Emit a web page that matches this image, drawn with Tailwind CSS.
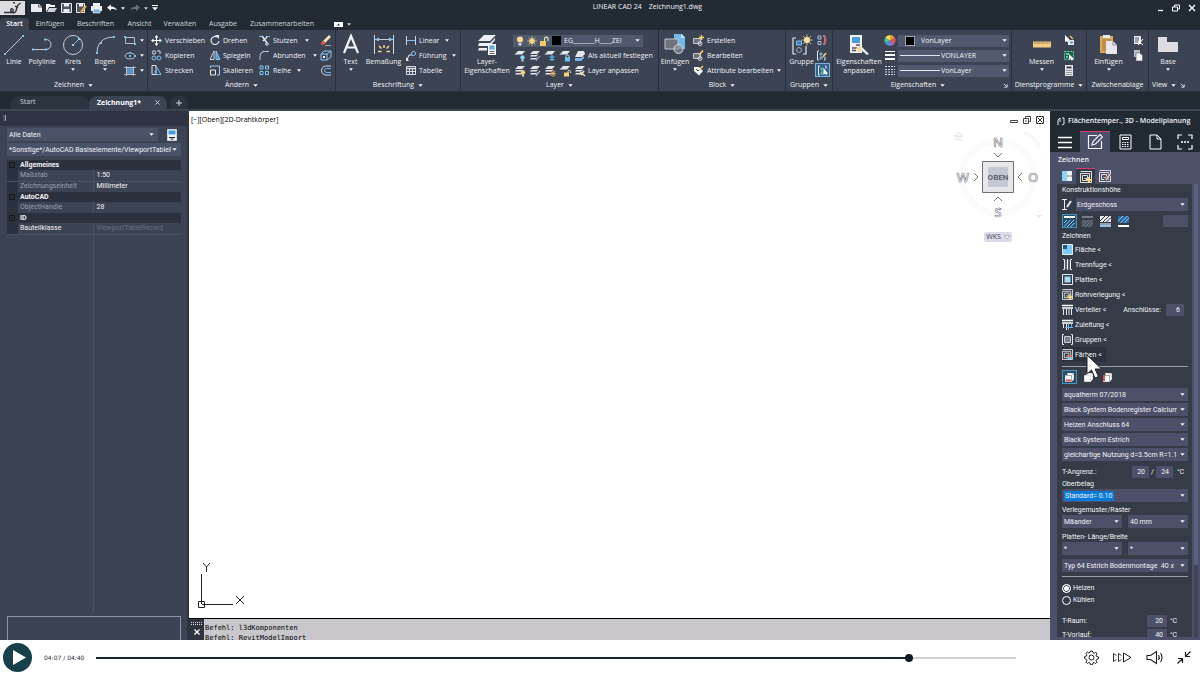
<!DOCTYPE html>
<html lang="de">
<head>
  <meta charset="UTF-8">
  <meta name="viewport" content="width=device-width, initial-scale=1.0">
  <title>LINEAR CAD 24 - Zeichnung1.dwg</title>
  <script src="https://cdn.jsdelivr.net/npm/@tailwindcss/browser@4"></script>
</head>
<body class="flex flex-col h-screen min-h-[600px] overflow-hidden bg-white font-['Open_Sans','Noto_Sans',sans-serif] text-[7px] leading-[10px] text-gray-100">

  <!-- Shared icons -->
  <svg class="hidden">
    <symbol id="dn" viewBox="0 0 6 4"><path d="M0 .3h6L3 3.7z" fill="currentColor"/></symbol>
    <symbol id="stack" viewBox="0 0 12 12"><g fill="#e4e6ea"><path d="M4 1h7L8 4H1z"/><path d="M2 5h6l2-1.500L7.500 6.500H1z"/><path d="M2 8h5.500l2-1.500L7 9.500H1z"/></g></symbol>
    <symbol id="layer1" viewBox="0 0 12 12"><path d="M4 1h7L8 4.500H1z" fill="#e4e6ea"/><path d="M4 1 1 4.500h2" fill="none" stroke="#9aa3b3"/></symbol>
    <symbol id="spiral" viewBox="0 0 12 12"><path d="M.5.5h11v11H.5V2.500h9v7h-7v-5h5v3h-3" fill="none" stroke="#f0f1f4" stroke-width=".9"/></symbol>
    <symbol id="launch" viewBox="0 0 6 6"><path d="M1 1l3.500 3.500M5 1.500V5H1.500" fill="none" stroke="currentColor"/></symbol>
  </svg>

  <!-- Title bar -->
  <header class="flex h-4 shrink-0 bg-[#222a33]">
    <div class="flex flex-[6] items-center gap-[4px]">
      <button aria-label="Menü" class="bg-[#dddde1] w-[25px] h-[14px] flex items-center justify-center mr-[2px]">
        <svg class="w-[20px] h-[13px]" viewBox="0 0 20 13" fill="none" stroke="#30343b" stroke-width="1.500"><path d="M1 10.500h6c3 0 4-2 2.500-3.500C8 6 7 8 8.500 10.500c3 1 5-1 5-3.500 0-2 1-4 4-6M12 4l3 2M10 0l2 1.500"/></svg>
      </button>
      <button aria-label="Neu"><svg class="w-[11px] h-[12px]" viewBox="0 0 11 12"><path d="M0 2h8l3 3v5H0z" fill="#e8eaed"/><path d="M7.500 2.500V5H11" fill="none" stroke="#555"/></svg></button>
      <button aria-label="Öffnen"><svg class="w-[11px] h-[12px]" viewBox="0 0 11 12"><path d="M0 10V2h4l1 1h4v2H3z" fill="#fff"/><path d="M3 6h8l-2.500 4H1z" fill="#cfd2d8"/></svg></button>
      <button aria-label="Speichern"><svg class="w-[11px] h-[12px]" viewBox="0 0 11 12"><path d="M.5 1.500h10v9h-10z" fill="#4d5561" stroke="#e8eaed"/><path d="M3 1.500h5v3H3zM2.500 7h6v3.500h-6z" fill="#e8eaed"/></svg></button>
      <button aria-label="Speichern unter"><svg class="w-[11px] h-[12px]" viewBox="0 0 11 12"><path d="M.5 1.500h8v9h-8z" fill="#4d5561" stroke="#e8eaed"/><path d="M3 1.500h4v3H3z" fill="#e8eaed"/><path d="M5 10l5-6" stroke="#f0b05a" stroke-width="2"/><path d="M4 11l1.500-1" stroke="#e0604a"/></svg></button>
      <button aria-label="Drucken"><svg class="w-[11px] h-[12px]" viewBox="0 0 11 12"><path d="M2 1h7v3H2zM0 4h11v5H0z" fill="#eceef1"/><path d="M2 7h7v4H2z" fill="#7fb7e6" stroke="#fff" stroke-width=".6"/></svg></button>
      <button aria-label="Zurück" class="flex items-center gap-[4px] ml-[1px]"><svg class="w-[10px] h-[8px]" viewBox="0 0 10 8"><path d="M0 3.500 4 .5v2c3 0 5 1.500 6 4-2-1.500-4-1.700-6-1.500v2z" fill="#f1f2f4"/></svg><svg class="w-[4px] h-[3px]"><use href="#dn"/></svg></button>
      <button aria-label="Wiederholen" class="flex items-center gap-[4px] ml-[1px] text-gray-300"><svg class="w-[10px] h-[8px]" viewBox="0 0 10 8"><path d="M10 3.500 6 .5v2C3 2.500 1 4 0 6.500 2 5 4 4.800 6 5v2z" fill="#68707b"/></svg><svg class="w-[4px] h-[3px]"><use href="#dn"/></svg></button>
      <button aria-label="Anpassen"><svg class="w-[6px] h-[6px]" viewBox="0 0 6 6"><path d="M0 0h6v1H0zM0 2.300h6L3 5.500z" fill="#fff"/></svg></button>
    </div>
    <h1 class="flex gap-[7px] pt-[2px]"><span>LINEAR CAD 24</span><span>Zeichnung1.dwg</span></h1>
    <div class="flex flex-[5] items-center justify-end gap-[8px] pr-[4px]">
      <button aria-label="Minimieren"><svg class="w-[7px] h-[8px]" viewBox="0 0 7 8"><path d="M1 6.500h5" stroke="#fff" stroke-width="1.300"/></svg></button>
      <button aria-label="Wiederherstellen"><svg class="w-[8px] h-[8px]" viewBox="0 0 8 8" fill="none" stroke="#fff"><path d="M.5 3h5v4h-5zM2.500 3V1h5v4h-2"/></svg></button>
      <button aria-label="Schließen"><svg class="w-[8px] h-[8px]" viewBox="0 0 8 8" stroke="#fff" stroke-width="1.300"><path d="M1 1l6 6M7 1 1 7"/></svg></button>
    </div>
  </header>

  <!-- Ribbon tabs -->
  <nav class="flex h-[14px] shrink-0 items-end bg-[#222a33] text-gray-300">
    <a href="#" class="w-[29px] h-[12px] pt-[1px] text-center rounded-t-sm bg-[#3c4353] text-white font-semibold">Start</a>
    <a href="#" class="w-[42px] h-[12px] pt-[1px] text-center">Einfügen</a>
    <a href="#" class="w-[49px] h-[12px] pt-[1px] text-center">Beschriften</a>
    <a href="#" class="w-[39px] h-[12px] pt-[1px] text-center">Ansicht</a>
    <a href="#" class="w-[42px] h-[12px] pt-[1px] text-center">Verwalten</a>
    <a href="#" class="w-[44px] h-[12px] pt-[1px] text-center">Ausgabe</a>
    <a href="#" class="w-[74px] h-[12px] pt-[1px] text-center">Zusammenarbeiten</a>
    <button aria-label="Multifunktionsleiste" class="flex items-center gap-[4px] ml-[15px] h-[12px]"><svg class="w-[9px] h-[5px]" viewBox="0 0 9 5"><path d="M0 0h9v5H0z" fill="#fff"/><path d="M3 3.500h3L4.500 1.500z" fill="#222a33"/></svg><svg class="w-[4px] h-[3px]"><use href="#dn"/></svg></button>
  </nav>

  <!-- Ribbon -->
  <div class="grid grid-cols-[148fr_188fr_125fr_198fr_127fr_47fr_179fr_75fr_62fr_51fr] h-[62px] shrink-0 bg-[#3c4353] border-b border-[#2a313c] whitespace-nowrap">

    <!-- Zeichnen -->
    <section class="flex flex-col min-w-0 border-r border-[#29303b]">
      <div class="flex flex-1 pt-[3px] pl-[2px]">
        <button class="w-[24px] flex flex-col items-center"><svg class="w-[22px] h-[24px]" viewBox="0 0 22 24"><path d="M2 21 20 3" stroke="#c6cbd4"/><path d="M1 20h2v2H1zM19 2h2v2h-2z" fill="#7cc0f0"/></svg>Linie</button>
        <button class="w-[32px] flex flex-col items-center"><svg class="w-[22px] h-[24px]" viewBox="0 0 22 24"><path d="M2 16.500h13a5 5 0 0 0 0-10H14" fill="none" stroke="#c6cbd4"/><path d="M1 15.500h2v2H1zM14 15.500h2v2h-2zM13 5.500h2v2h-2z" fill="#7cc0f0"/></svg>Polylinie</button>
        <button class="w-[30px] flex flex-col items-center"><svg class="w-[22px] h-[24px]" viewBox="0 0 22 24"><circle cx="11" cy="12" r="9.500" fill="none" stroke="#c6cbd4"/><path d="M11 12l6-6" stroke="#7cc0f0"/><path d="M10 11h2v2h-2zM16 5h2v2h-2z" fill="#9ad0f8"/></svg>Kreis<svg class="w-[4px] h-[3px] mt-[1px]"><use href="#dn"/></svg></button>
        <button class="w-[34px] flex flex-col items-center"><svg class="w-[22px] h-[24px]" viewBox="0 0 22 24"><path d="M3 20C3 11 8 4 20 4" fill="none" stroke="#c6cbd4"/><path d="M2 19h2v2H2zM6 9h2v2H6zM19 3h2v2h-2z" fill="#7cc0f0"/></svg>Bogen<svg class="w-[4px] h-[3px] mt-[1px]"><use href="#dn"/></svg></button>
        <div class="flex flex-col pl-[2px]">
          <button aria-label="Rechteck" class="flex items-center gap-[4px] h-[15px]"><svg class="w-[12px] h-[10px]" viewBox="0 0 12 10"><path d="M1.500 1.500h9v6h-9z" fill="none" stroke="#b8bec9"/><path d="M0 0h2v2H0zM10 7h2v2h-2z" fill="#7cc0f0"/></svg><svg class="w-[4px] h-[3px]"><use href="#dn"/></svg></button>
          <button aria-label="Ellipse" class="flex items-center gap-[4px] h-[15px]"><svg class="w-[12px] h-[10px]" viewBox="0 0 12 10"><ellipse cx="6" cy="5" rx="5" ry="3" fill="none" stroke="#b8bec9"/><path d="M5 4h2v2H5zM10 4h2v2h-2zM5 1h2v1H5z" fill="#7cc0f0"/></svg><svg class="w-[4px] h-[3px]"><use href="#dn"/></svg></button>
          <button aria-label="Schraffur" class="flex items-center gap-[4px] h-[15px]"><svg class="w-[12px] h-[10px]" viewBox="0 0 12 10"><path d="M2 1h8v8H2z" fill="#5f93c4"/><path d="M0 1.500h12M0 8.500h12M2.500 0v10M9.500 0v10" stroke="#c6cbd4" stroke-width=".8"/></svg><svg class="w-[4px] h-[3px]"><use href="#dn"/></svg></button>
        </div>
      </div>
      <h2 class="flex h-[12px] items-center justify-center gap-[4px]">Zeichnen <svg class="w-[5px] h-[3px]"><use href="#dn"/></svg></h2>
    </section>

    <!-- Ändern -->
    <section class="flex flex-col min-w-0 border-r border-[#29303b]">
      <div class="flex flex-1 pt-[3px] pl-[3px]">
        <div class="w-[59px]">
          <button class="flex items-center gap-[3px] h-[15px]"><svg class="w-[11px] h-[11px]" viewBox="0 0 11 11"><path d="M5.500 1v9M1 5.500h9" stroke="#fff"/><path d="M5.500 0l2 2.500h-4zM5.500 11l2-2.500h-4zM0 5.500l2.500-2v4zM11 5.500l-2.500-2v4z" fill="#fff"/></svg>Verschieben</button>
          <button class="flex items-center gap-[3px] h-[15px]"><svg class="w-[11px] h-[11px]" viewBox="0 0 11 11" fill="none"><circle cx="3" cy="8" r="2" stroke="#7cc0f0"/><circle cx="8" cy="8" r="2" stroke="#7cc0f0"/><circle cx="3" cy="2.500" r="1.700" stroke="#dfe2e7"/><path d="M6 1h3v3" stroke="#dfe2e7"/></svg>Kopieren</button>
          <button class="flex items-center gap-[3px] h-[15px]"><svg class="w-[11px] h-[11px]" viewBox="0 0 11 11" fill="none"><path d="M1 .5h4v9H1z" stroke="#dfe2e7"/><path d="M5 1l5 8.500H5" stroke="#7cc0f0"/><path d="M3 7h3" stroke="#7cc0f0"/></svg>Strecken</button>
        </div>
        <div class="w-[49px]">
          <button class="flex items-center gap-[3px] h-[15px]"><svg class="w-[10px] h-[11px]" viewBox="0 0 10 11"><path d="M7 2a4 4 0 1 0 2 4" fill="none" stroke="#e8eaed" stroke-width="1.200"/><path d="M5 0h4v4z" fill="#e8eaed"/></svg>Drehen</button>
          <button class="flex items-center gap-[3px] h-[15px]"><svg class="w-[10px] h-[11px]" viewBox="0 0 10 11"><path d="M4 1v8.500H0z" fill="none" stroke="#cfd3da"/><path d="M6 1v8.500h4z" fill="#4d93d0" stroke="#8ac6f5"/></svg>Spiegeln</button>
          <button class="flex items-center gap-[3px] h-[15px]"><svg class="w-[10px] h-[11px]" viewBox="0 0 10 11" fill="none"><path d="M.5 3V1h9v9H7" stroke="#9ecdf2"/><path d="M.5 5h5v5h-5z" stroke="#e8eaed"/></svg>Skalieren</button>
        </div>
        <div class="w-[61px]">
          <button class="flex items-center gap-[3px] h-[15px]"><svg class="w-[11px] h-[11px]" viewBox="0 0 11 11"><path d="M0 1.500h4M7 1.500h4" stroke="#7cc0f0"/><path d="M3 1l5 7M8 2 4 6" stroke="#eee" stroke-width="1.300"/><circle cx="8" cy="9" r="1.300" fill="none" stroke="#eee"/></svg>Stutzen <svg class="w-[4px] h-[3px] ml-[4px]"><use href="#dn"/></svg></button>
          <button class="flex items-center gap-[3px] h-[15px]"><svg class="w-[11px] h-[11px]" viewBox="0 0 11 11"><path d="M1 10V7c0-3 2-5.500 5-5.500h4" fill="none" stroke="#bfc5cf"/><path d="M1 5c.5-2 2-3.500 4-4" fill="none" stroke="#7cc0f0"/></svg>Abrunden <svg class="w-[4px] h-[3px] ml-[4px]"><use href="#dn"/></svg></button>
          <button class="flex items-center gap-[3px] h-[15px]"><svg class="w-[11px] h-[11px]" viewBox="0 0 11 11" fill="none" stroke="#8ac6f5"><path d="M1 1h3v3H1zM6.500 1h3v3h-3zM1 6.500h3v3H1zM6.500 6.500h3v3h-3z"/></svg>Reihe <svg class="w-[4px] h-[3px] ml-[3px]"><use href="#dn"/></svg></button>
        </div>
        <div>
          <button aria-label="Löschen" class="flex items-center h-[15px]"><svg class="w-[12px] h-[11px]" viewBox="0 0 12 11"><path d="M3 8l7-7" stroke="#f3e3b8" stroke-width="2.800"/><path d="M1.500 9.500l3-3" stroke="#e2574c" stroke-width="2.500"/><path d="M5 10.500h6" stroke="#aab"/></svg></button>
          <button aria-label="Ursprung" class="flex items-center h-[15px]"><svg class="w-[12px] h-[11px]" viewBox="0 0 12 11"><path d="M1 4h6v6H1zM1 4l3-3h7v6l-4 3M7 4l4-3" fill="none" stroke="#8fc3ee"/><path d="M3 6h2v2H3z" fill="#fff"/></svg></button>
          <button aria-label="Versetzen" class="flex items-center h-[15px]"><svg class="w-[12px] h-[11px]" viewBox="0 0 12 11" fill="none"><path d="M11 1H6a4.500 4.500 0 0 0 0 9h5" stroke="#d2d6dd"/><path d="M11 3.500H6.500a2 2 0 0 0 0 4H11" stroke="#6db1e8"/></svg></button>
        </div>
      </div>
      <h2 class="flex h-[12px] items-center justify-center gap-[4px]">Ändern <svg class="w-[5px] h-[3px]"><use href="#dn"/></svg></h2>
    </section>

    <!-- Beschriftung -->
    <section class="flex flex-col min-w-0 border-r border-[#29303b]">
      <div class="flex flex-1 pt-[3px] pl-[3px]">
        <button class="w-[23px] flex flex-col items-center"><svg class="w-[18px] h-[24px]" viewBox="0 0 18 24"><path d="M2 20 9 3l7 17M4.500 14.500h9" fill="none" stroke="#f4f5f7" stroke-width="2.200"/></svg>Text<svg class="w-[4px] h-[3px] mt-[1px]"><use href="#dn"/></svg></button>
        <button class="w-[43px] flex flex-col items-center"><svg class="w-[24px] h-[24px]" viewBox="0 0 24 24"><path d="M2.500 2v19M21.500 2v19" stroke="#d3d7de"/><path d="M3 6.500h18" stroke="#c6cbd4"/><path d="M3 6.500l4-2v4zM21 6.500l-4-2v4z" fill="#8ac6f5"/><path d="M12 12v3M7 13l2.500 2.500M17 13l-2.500 2.500M6 18.500h3.500M14.500 18.500H18" stroke="#f7d58c" stroke-width="1.500"/></svg>Bemaßung</button>
        <div class="pl-[1px]">
          <button class="flex items-center gap-[3px] h-[15px]"><svg class="w-[10px] h-[11px]" viewBox="0 0 10 11"><path d="M.5 1v9M9.500 1v9" stroke="#d3d7de"/><path d="M1 5.500h8" stroke="#7cc0f0"/></svg>Linear <svg class="w-[4px] h-[3px] ml-[3px]"><use href="#dn"/></svg></button>
          <button class="flex items-center gap-[3px] h-[15px]"><svg class="w-[10px] h-[11px]" viewBox="0 0 10 11" fill="none"><path d="M1 10l2-5h3" stroke="#e8eaed"/><circle cx="7.500" cy="3.500" r="2" stroke="#8ac6f5"/><path d="M0 7v4h3z" fill="#e8eaed"/></svg>Führung <svg class="w-[4px] h-[3px] ml-[3px]"><use href="#dn"/></svg></button>
          <button class="flex items-center gap-[3px] h-[15px]"><svg class="w-[10px] h-[11px]" viewBox="0 0 10 11" fill="none"><path d="M.5 1.500h9v8h-9zM.5 6.500h9M3.500 4v5.500M6.500 4v5.500" stroke="#d9dce2"/><path d="M.5 3.500h9" stroke="#d9dce2" stroke-width="1.500"/></svg>Tabelle</button>
        </div>
      </div>
      <h2 class="flex h-[12px] items-center justify-center gap-[4px]">Beschriftung <svg class="w-[5px] h-[3px]"><use href="#dn"/></svg></h2>
    </section>

    <!-- Layer -->
    <section class="flex flex-col min-w-0 border-r border-[#29303b]">
      <div class="flex flex-1 pt-[3px] pl-[2px]">
        <button class="w-[48px] flex flex-col items-center leading-[9px]"><svg class="w-[24px] h-[24px]" viewBox="0 0 24 24"><g fill="#eceef1"><path d="M9 2h12l-6 6H3z"/><path d="M4 10h11l5-5v2l-5 6H3zM4 15h8v2.500H3z"/></g><path d="M13 11h8v11h-8z" fill="#f5f6f8"/><path d="M14.500 12.500h5v4h-5z" fill="#5fa9e0"/><path d="M14.500 18.500h5M14.500 20.500h5" stroke="#667"/></svg><span>Layer-<br>Eigenschaften</span></button>
        <div class="pl-[2px]">
          <div class="h-[15px] flex items-center">
            <label class="flex items-center gap-[3px] w-[130px] h-[12px] px-[3px] bg-[#50596d]">
              <svg class="w-[8px] h-[10px]" viewBox="0 0 8 10"><circle cx="4" cy="3.500" r="3" fill="#f9dc8e"/><path d="M2.500 7h3v2.500h-3z" fill="#d5d7db"/></svg>
              <svg class="w-[10px] h-[10px]" viewBox="0 0 10 10"><circle cx="5" cy="5" r="2.700" fill="#fadf98"/><path d="M5 0v10M0 5h10M1.500 1.500l7 7M8.500 1.500l-7 7" stroke="#f6cf76" stroke-width=".7"/></svg>
              <svg class="w-[9px] h-[10px]" viewBox="0 0 9 10"><path d="M0 5h6v5H0z" fill="#f3c868"/><path d="M4.500 5V3a1.800 1.800 0 0 1 3.600 0v2" fill="none" stroke="#f6e3b3" stroke-width="1.200"/></svg>
              <span class="w-[9px] h-[9px] bg-black"></span>
              <select aria-label="Layer" class="appearance-none flex-1 min-w-0"><option>EG_______H____ZEI</option></select>
              <svg class="w-[5px] h-[3px]"><use href="#dn"/></svg>
            </label>
          </div>
          <div class="h-[15px] flex items-center gap-[3px] pl-[1px]">
            <svg class="w-[12px] h-[12px]" viewBox="0 0 12 12"><use href="#layer1"/><circle cx="8.500" cy="7.500" r="2.200" fill="#7fd3f2"/><path d="M7.500 9.500h2v2h-2z" fill="#ddd"/></svg>
            <svg class="w-[12px] h-[12px]" viewBox="0 0 12 12"><use href="#stack"/><path d="M7 11l4-5" stroke="#8ac6f5"/></svg>
            <svg class="w-[12px] h-[12px]" viewBox="0 0 12 12"><use href="#layer1"/><path d="M8 5v6M5.500 6.500l5 3M10.500 6.500l-5 3" stroke="#57b4ea" stroke-width="1.300"/></svg>
            <svg class="w-[12px] h-[12px]" viewBox="0 0 12 12"><use href="#layer1"/><path d="M6 7.500h5v4H6z" fill="#6bc0f0"/><path d="M7 8V6.500a1.500 1.500 0 0 1 3 0V8" fill="none" stroke="#bfe3f8"/></svg>
            <button class="flex items-center gap-[2px]"><svg class="w-[12px] h-[12px]" viewBox="0 0 12 12"><path d="M4 1h6l1 3-3 3H1z" fill="#e4e6ea"/><path d="M1 8h6l3-2v2L7 11H1z" fill="#7db9e8"/></svg>Als aktuell festlegen</button>
          </div>
          <div class="h-[15px] flex items-center gap-[3px] pl-[1px]">
            <svg class="w-[12px] h-[12px]" viewBox="0 0 12 12"><use href="#stack"/><circle cx="9" cy="7.500" r="2.200" fill="#f6cf76"/><path d="M8 9.500h2v2H8z" fill="#ddd"/></svg>
            <svg class="w-[12px] h-[12px]" viewBox="0 0 12 12"><use href="#stack"/><path d="M7 11l4-5" stroke="#e4e6ea"/></svg>
            <svg class="w-[12px] h-[12px]" viewBox="0 0 12 12"><use href="#stack"/><path d="M9 5v7M5.500 8.500h7M6.500 6l5 5M11.500 6l-5 5" stroke="#f3b66c" stroke-width=".9"/></svg>
            <svg class="w-[12px] h-[12px]" viewBox="0 0 12 12"><use href="#layer1"/><path d="M5 7.500h5v4H5z" fill="#f6cf76"/><path d="M9 8V6.500a1.200 1.200 0 0 1 2.400 0V8" fill="none" stroke="#f6e3b3"/></svg>
            <button class="flex items-center gap-[2px]"><svg class="w-[12px] h-[12px]" viewBox="0 0 12 12"><use href="#stack"/><path d="M6 7l5 4M7 10l3-4" stroke="#f5e2b8" stroke-width="1.500"/></svg>Layer anpassen</button>
          </div>
        </div>
      </div>
      <h2 class="flex h-[12px] items-center justify-center gap-[4px]">Layer <svg class="w-[5px] h-[3px]"><use href="#dn"/></svg></h2>
    </section>

    <!-- Block -->
    <section class="flex flex-col min-w-0 border-r border-[#29303b]">
      <div class="flex flex-1 pt-[3px]">
        <button class="w-[32px] flex flex-col items-center"><svg class="w-[22px] h-[24px]" viewBox="0 0 22 24"><path d="M10 1h8l3 3v12h-11z" fill="#6fb9ec"/><path d="M17 1v4h4" fill="#cde7f8"/><path d="M1 6h13v10H1z" fill="#6d727c" stroke="#c3c7ce"/><circle cx="14.500" cy="16" r="4.500" fill="#8a8f99" fill-opacity=".7" stroke="#d6d9de"/></svg>Einfügen<svg class="w-[4px] h-[3px] mt-[1px]"><use href="#dn"/></svg></button>
        <div class="pl-[2px]">
          <button class="flex items-center gap-[3px] h-[15px]"><svg class="w-[11px] h-[11px]" viewBox="0 0 11 11"><path d="M.5 3.500h7v5h-7z" fill="#6d727c" stroke="#c3c7ce"/><circle cx="7" cy="8.500" r="2" fill="none" stroke="#ddd"/><path d="M8.500 0v5M6 2.500h5" stroke="#f6cf76" stroke-width="1.500"/></svg>Erstellen</button>
          <button class="flex items-center gap-[3px] h-[15px]"><svg class="w-[11px] h-[11px]" viewBox="0 0 11 11"><path d="M.5 3.500h7v5h-7z" fill="#6d727c" stroke="#c3c7ce"/><circle cx="7" cy="8.500" r="2" fill="none" stroke="#ddd"/><path d="M6 5l4-4.500" stroke="#f6cf76" stroke-width="1.700"/></svg>Bearbeiten</button>
          <button class="flex items-center gap-[3px] h-[15px]"><svg class="w-[11px] h-[11px]" viewBox="0 0 11 11"><path d="M1 2h5l4 4-4 4.500L1 6z" fill="#f1f2f4"/><path d="M3 4l2 2 5-5" fill="none" stroke="#3c4454"/><path d="M6 5l4-4" stroke="#f6cf76" stroke-width="1.500"/></svg>Attribute bearbeiten <svg class="w-[4px] h-[3px]"><use href="#dn"/></svg></button>
        </div>
      </div>
      <h2 class="flex h-[12px] items-center justify-center gap-[4px]">Block <svg class="w-[5px] h-[3px]"><use href="#dn"/></svg></h2>
    </section>

    <!-- Gruppen -->
    <section class="flex flex-col min-w-0 border-r border-[#29303b]">
      <div class="flex flex-1 pt-[3px] pl-[2px]">
        <button class="w-[27px] flex flex-col items-center"><svg class="w-[22px] h-[24px]" viewBox="0 0 22 24" fill="none"><path d="M5 5H2v16h3M12 21h3v-8" stroke="#e4e6ea" stroke-width="1.200"/><path d="M5.500 8h5v4h-5z" fill="#3f7eb5" stroke="#7cc0f0"/><circle cx="8" cy="17" r="2.500" stroke="#a5abb6"/><path d="M16 1.500v11M10.500 7h11M12 3l8 8M20 3l-8 8" stroke="#f8d98f" stroke-width=".8"/><circle cx="16" cy="7" r="3" fill="#fae3a8"/></svg>Gruppe</button>
        <div>
          <button aria-label="Gruppierung aufheben" class="flex items-center justify-center w-[14px] h-[15px]"><svg class="w-[10px] h-[11px]" viewBox="0 0 10 11" fill="none"><path d="M1 1h3v3H1zM1 6.500h3v3H1z" stroke="#a9c9e4"/><path d="M6 1h2v8H6" stroke="#e4e6ea"/><path d="M7 1l2 4-2 4" stroke="#e0525a" stroke-width="1.500"/></svg></button>
          <button aria-label="Gruppe bearbeiten" class="flex items-center justify-center w-[14px] h-[15px]"><svg class="w-[10px] h-[11px]" viewBox="0 0 10 11" fill="none"><path d="M2 1H.5v9H2M7 10h1V7" stroke="#e4e6ea"/><path d="M3 3h2v2H3zM3 7h2v2H3z" stroke="#7cc0f0"/><path d="M6 7l3-4" stroke="#f3c27a" stroke-width="1.800"/></svg></button>
          <button aria-label="Gruppenauswahl" class="flex items-center justify-center w-[15px] h-[14px] bg-[#35618c] border border-[#7db4e2]"><svg class="w-[10px] h-[11px]" viewBox="0 0 10 11" fill="none"><path d="M2 1H.5v9H2M7 1h1v3" stroke="#e4e6ea"/><path d="M3 3h2v2H3zM3 7h2v2H3z" stroke="#58cf98"/><path d="M5.500 3v7l1.500-1.500 1.500 2 .5-2H10z" fill="#fff"/></svg></button>
        </div>
      </div>
      <h2 class="flex h-[12px] items-center justify-center gap-[4px]">Gruppen <svg class="w-[5px] h-[3px]"><use href="#dn"/></svg></h2>
    </section>

    <!-- Eigenschaften -->
    <section class="flex flex-col min-w-0 border-r border-[#29303b]">
      <div class="flex flex-1 pt-[3px] pl-[1px] pr-[2px]">
        <button class="w-[50px] flex flex-col items-center leading-[9px]"><svg class="w-[22px] h-[24px]" viewBox="0 0 22 24"><path d="M2 2h12v18H2z" fill="#f1f2f4"/><path d="M4 4h8v6H4z" fill="#4a9cd8"/><path d="M8 12h4M4 15h5M4 17.500h4" stroke="#556" stroke-width="1.300"/><path d="M8 15l4-2 3 3-4 4z" fill="#f5d48f"/><path d="M12 12l3 3 6 6-2 1-6-5z" fill="#e9eaee"/></svg><span>Eigenschaften<br>anpassen</span></button>
        <div class="flex flex-col flex-1 min-w-0">
          <label class="flex items-center gap-[2px] h-[15px]">
            <svg class="w-[12px] h-[11px]" viewBox="0 0 12 11"><path d="M6 5.500V0a5.500 5.500 0 0 1 4.800 2.800z" fill="#f2a23c"/><path d="M6 5.500l4.800-2.700a5.500 5.500 0 0 1 0 5.400z" fill="#e8564f"/><path d="M6 5.500l4.800 2.700A5.500 5.500 0 0 1 6 11z" fill="#a864c8"/><path d="M6 5.500V11a5.500 5.500 0 0 1-4.800-2.800z" fill="#4a90dc"/><path d="M6 5.500 1.200 8.200a5.500 5.500 0 0 1 0-5.400z" fill="#4cc38a"/><path d="M6 5.500 1.200 2.800A5.500 5.500 0 0 1 6 0z" fill="#f4dc52"/></svg>
            <span class="flex flex-1 min-w-0 items-center h-[12px] bg-[#50596d] pl-[7px] pr-[2px]"><span class="w-[10px] h-[10px] bg-black border border-gray-400"></span><select aria-label="Farbe" class="appearance-none flex-1 min-w-0 pl-[6px]"><option>VonLayer</option></select><svg class="w-[5px] h-[3px]"><use href="#dn"/></svg></span>
          </label>
          <label class="flex items-center gap-[2px] h-[15px]">
            <svg class="w-[12px] h-[11px]" viewBox="0 0 12 11"><path d="M1 1.500h10" stroke="#fff"/><path d="M1 5h10M1 9h10" stroke="#fff" stroke-width="2"/></svg>
            <span class="flex flex-1 min-w-0 items-center h-[12px] bg-[#50596d] pl-[2px] pr-[2px]"><span class="w-[40px] border-t border-gray-200"></span><select aria-label="Linienstärke" class="appearance-none flex-1 min-w-0 pl-[1px]"><option>VONLAYER</option></select><svg class="w-[5px] h-[3px]"><use href="#dn"/></svg></span>
          </label>
          <label class="flex items-center gap-[2px] h-[15px]">
            <svg class="w-[12px] h-[11px]" viewBox="0 0 12 11"><path d="M1 1.500h10M1 4.500h10M1 7h10M1 9.500h10" stroke="#d6d9de" stroke-dasharray="2 1"/></svg>
            <span class="flex flex-1 min-w-0 items-center h-[12px] bg-[#50596d] pl-[2px] pr-[2px]"><span class="w-[40px] border-t border-gray-200"></span><select aria-label="Linientyp" class="appearance-none flex-1 min-w-0 pl-[1px]"><option>VonLayer</option></select><svg class="w-[5px] h-[3px]"><use href="#dn"/></svg></span>
          </label>
        </div>
      </div>
      <h2 class="flex h-[12px] items-center pr-[3px]"><span class="flex flex-1 items-center justify-center gap-[4px]">Eigenschaften <svg class="w-[5px] h-[3px]"><use href="#dn"/></svg></span><svg class="w-[5px] h-[5px]"><use href="#launch"/></svg></h2>
    </section>

    <!-- Dienstprogramme -->
    <section class="flex flex-col min-w-0 border-r border-[#29303b]">
      <div class="flex flex-1 justify-center pt-[3px]">
        <button class="w-[34px] flex flex-col items-center"><svg class="w-[22px] h-[24px]" viewBox="0 0 22 24"><path d="M2 8.500h18v6H2z" fill="#f3cf86"/><path d="M4 9v2M6 9v1.500M8 9v2M10 9v1.500M12 9v2M14 9v1.500M16 9v2M18 9v1.500" stroke="#8a6a30" stroke-width=".8"/></svg>Messen<svg class="w-[4px] h-[3px] mt-[1px]"><use href="#dn"/></svg></button>
        <div class="pl-[5px]">
          <button aria-label="Schnellauswahl" class="flex items-center h-[15px]"><svg class="w-[10px] h-[11px]" viewBox="0 0 10 11"><path d="M1 0v7l2-1 1 2 1-1-1-2h2z" fill="#fff"/><path d="M4 5h6v5H4z" fill="#e9eaee"/><path d="M6 6.500h3v2H6z" fill="#4a9cd8"/><path d="M6 1l3 3" stroke="#e9b46a" stroke-width="1.500"/></svg></button>
          <button aria-label="Alles auswählen" class="flex items-center h-[15px]"><svg class="w-[10px] h-[11px]" viewBox="0 0 10 11"><path d="M.5 1.500h9v8h-9z" fill="#245c4c" stroke="#5fcf9a" stroke-dasharray="2 1"/><path d="M2 3h3v2H2zM2 6h2v2H2z" fill="#5fcf9a"/><path d="M5 4v6l1.500-1.500L8 11l1-2h1z" fill="#fff"/></svg></button>
          <button aria-label="Taschenrechner" class="flex items-center h-[15px]"><svg class="w-[10px] h-[11px]" viewBox="0 0 10 11"><path d="M1 0h8v11H1z" fill="#e4e6ea"/><path d="M2.500 1.500h5v2h-5z" fill="#3c4454"/><path d="M2.500 5.500h5M2.500 7.500h5M2.500 9.500h5" stroke="#3c4454" stroke-dasharray="1 1"/></svg></button>
        </div>
      </div>
      <h2 class="flex h-[12px] items-center justify-center gap-[4px]">Dienstprogramme <svg class="w-[5px] h-[3px]"><use href="#dn"/></svg></h2>
    </section>

    <!-- Zwischenablage -->
    <section class="flex flex-col min-w-0 border-r border-[#29303b]">
      <div class="flex flex-1 justify-center pt-[3px]">
        <button class="w-[34px] flex flex-col items-center"><svg class="w-[22px] h-[24px]" viewBox="0 0 22 24"><path d="M2 3h13v17H2z" fill="#dbab63"/><path d="M5 2h7v3H5z" fill="#e9eaee"/><path d="M4 6h9v12H4z" fill="#c08f49"/><path d="M8 8h7l4 4v9H8z" fill="#e9e6ee"/><path d="M15 8v4h4" fill="none" stroke="#888"/></svg>Einfügen<svg class="w-[4px] h-[3px] mt-[1px]"><use href="#dn"/></svg></button>
        <div class="pl-[7px]">
          <button aria-label="Ausschneiden" class="flex items-center h-[15px]"><svg class="w-[11px] h-[11px]" viewBox="0 0 11 11"><path d="M1 1h7v8H1z" fill="#e9eaee"/><path d="M2 3h4M2 5h4M2 7h3" stroke="#556"/><path d="M5 10l5-6M5 6l5 4" stroke="#fff"/></svg></button>
          <button aria-label="Kopieren" class="flex items-center h-[15px]"><svg class="w-[11px] h-[11px]" viewBox="0 0 11 11"><path d="M1 0h6v7H1z" fill="#b9bdc6"/><path d="M3 3h4l2.500 2.500V11H3z" fill="#f4f5f7" stroke="#556" stroke-width=".6"/></svg></button>
        </div>
      </div>
      <h2 class="h-[12px] text-center pt-[1px]">Zwischenablage</h2>
    </section>

    <!-- View -->
    <section class="flex flex-col min-w-0">
      <div class="flex flex-1 pt-[3px] pl-[2px]">
        <button class="w-[34px] flex flex-col items-center"><svg class="w-[22px] h-[24px]" viewBox="0 0 22 24"><path d="M1 4h9v5h11v10H1z" fill="#dcdce1"/></svg>Base<svg class="w-[4px] h-[3px] mt-[1px]"><use href="#dn"/></svg></button>
      </div>
      <h2 class="flex h-[12px] items-center gap-[4px] pl-[3px]">View <svg class="w-[5px] h-[3px]"><use href="#dn"/></svg><svg class="w-[5px] h-[5px]"><use href="#launch"/></svg></h2>
    </section>
  </div>

  <!-- Drawing tabs -->
  <div class="flex h-[19px] shrink-0 items-end bg-[#222a33] border-b-2 border-[#3e4552]">
    <a href="#" class="w-[78px] h-[13px] ml-[11px] pl-[9px] pt-[1px] rounded-t-lg bg-[#2c343f] text-gray-300">Start</a>
    <div class="flex items-center w-[78px] h-[13px] pl-[8px] pr-[7px] rounded-t-lg bg-[#3c4353] font-bold text-white"><a href="#" class="flex-1">Zeichnung1*</a><button aria-label="Tab schließen"><svg class="w-[5px] h-[5px]" viewBox="0 0 5 5"><path d="M.5.5l4 4M4.500.5l-4 4" stroke="#cfd3da"/></svg></button></div>
    <button aria-label="Neue Zeichnung" class="flex items-center justify-center w-[18px] h-[13px] ml-[3px] rounded-t-lg bg-[#2c343f]"><svg class="w-[6px] h-[6px]" viewBox="0 0 6 6"><path d="M3 0v6M0 3h6" stroke="#cfd3da"/></svg></button>
  </div>

  <!-- Work area -->
  <main class="flex flex-1 min-h-0">

    <!-- Properties palette -->
    <aside class="flex flex-col w-[189px] shrink-0 bg-[#3c4353] border-r-2 border-[#2e3542] font-[Roboto,sans-serif]">
      <div class="h-[15px] shrink-0 bg-[#2d3340] pl-[3px] pt-[4px]"><div class="w-[3px] h-[6px] bg-[#4a5160] border-r border-gray-400"></div></div>
      <div class="flex items-center justify-between pl-[7px] pr-[9px] pt-[2px]">
        <div class="flex items-center w-[151px] h-[13px] bg-[#4a5267] px-[2px]"><select aria-label="Datenfilter" class="appearance-none flex-1 min-w-0"><option>Alle Daten</option></select><svg class="w-[5px] h-[3px] mr-[2px]"><use href="#dn"/></svg></div>
        <button aria-label="Speichern" class="mr-[1px]"><svg class="w-[10px] h-[12px]" viewBox="0 0 10 12"><path d="M.5.5h9v11h-9z" fill="#f4f5f7" stroke="#cfd3da"/><path d="M1.500 1.500h7v4h-7z" fill="#4a9cd8"/><path d="M2 8.500h6M3.500 10h3" stroke="#222"/></svg></button>
      </div>
      <div class="flex items-center h-[13px] mt-[2px] ml-[7px] mr-[6px] bg-[#4a5267] px-[2px] shrink-0"><select aria-label="Elementtyp" class="appearance-none flex-1 min-w-0"><option>*Sonstige*/AutoCAD Basiselemente/ViewportTableRe</option></select><svg class="w-[5px] h-[3px] ml-[1px] mr-[2px]"><use href="#dn"/></svg></div>
      <table class="mt-[4px] ml-[7px] w-[174px] table-fixed text-left leading-[9px]">
        <colgroup><col class="w-[11px]"><col class="w-[75px]"><col></colgroup>
        <tr class="h-[10px] bg-[#2c313e]"><td><svg class="w-[6px] h-[6px] ml-[2px]" viewBox="0 0 6 6"><path d="M.5.5h5v5h-5zM2 3h2" fill="none" stroke="#11151d"/></svg></td><th colspan="2" class="font-bold pl-[2px]">Allgemeines</th></tr>
        <tr class="h-[11px] border-b border-[#4b5262]"><td class="bg-[#2c313e]"></td><td class="pl-[2px] text-gray-400">Maßstab</td><td class="pl-[3px] border-l border-[#4b5262]">1:50</td></tr>
        <tr class="h-[11px]"><td class="bg-[#2c313e]"></td><td class="pl-[2px] text-gray-400">Zeichnungseinheit</td><td class="pl-[3px] border-l border-[#4b5262]">Millimeter</td></tr>
        <tr class="h-[10px] bg-[#2c313e]"><td><svg class="w-[6px] h-[6px] ml-[2px]" viewBox="0 0 6 6"><path d="M.5.5h5v5h-5zM2 3h2" fill="none" stroke="#11151d"/></svg></td><th colspan="2" class="font-bold pl-[2px]">AutoCAD</th></tr>
        <tr class="h-[11px]"><td class="bg-[#2c313e]"></td><td class="pl-[2px] text-gray-400">ObjectHandle</td><td class="pl-[3px] border-l border-[#4b5262]">28</td></tr>
        <tr class="h-[10px] bg-[#2c313e]"><td><svg class="w-[6px] h-[6px] ml-[2px]" viewBox="0 0 6 6"><path d="M.5.5h5v5h-5zM2 3h2" fill="none" stroke="#11151d"/></svg></td><th colspan="2" class="font-bold pl-[2px]">ID</th></tr>
        <tr class="h-[11px] border-b border-[#4b5262]"><td class="bg-[#2c313e]"></td><td class="pl-[2px]">Bauteilklasse</td><td class="pl-[3px] border-l border-[#4b5262] text-gray-500">ViewportTableRecord</td></tr>
      </table>
      <div class="flex-1 ml-[93px] border-l border-[#4b5262]"></div>
      <div class="h-[24px] shrink-0 mt-[4px] ml-[7px] mr-[6px] border border-b-0 border-[#8b93a8]"></div>
    </aside>

    <!-- Drawing canvas -->
    <div class="flex flex-col flex-1 min-w-0 bg-white text-black">
      <div class="relative flex-1">
        <div class="flex items-start justify-between pt-[4px] pl-[2px] pr-[6px]">
          <span>[−][Oben][2D-Drahtkörper]</span>
          <span class="flex gap-[5px] pt-[1px]">
            <button aria-label="Ansicht minimieren"><svg class="w-[8px] h-[8px]" viewBox="0 0 8 8"><path d="M.5 4.500h7v2h-7z" fill="none" stroke="#444"/></svg></button>
            <button aria-label="Ansicht wiederherstellen"><svg class="w-[8px] h-[8px]" viewBox="0 0 8 8" fill="none" stroke="#444"><path d="M.5 2.500h5v5h-5zM2.500 2V.5h5v5H6M2 5h2"/></svg></button>
            <button aria-label="Ansicht schließen"><svg class="w-[8px] h-[8px]" viewBox="0 0 8 8" fill="none" stroke="#444"><path d="M.5.5h7v7h-7zM1.500 1.500l5 5M6.500 1.500l-5 5"/></svg></button>
          </span>
        </div>
        <!-- View cube -->
        <svg class="absolute top-[15px] right-[4px] w-[96px] h-[120px]" viewBox="0 0 96 120">
          <circle cx="48" cy="51" r="36" fill="none" stroke="#fbfbfd" stroke-width="7"/>
          <path d="M4 11h9M8.500 6l4 4h-8zM5 13.500h7" fill="none" stroke="#e4e4ea"/>
          <path d="M74 7c8 2 13 7 15 15" fill="none" stroke="#f6f6f9" stroke-width="3"/>
          <path d="M86 89h6l-3 3z" fill="#e6e6ec"/>
          <g class="font-['Open_Sans',sans-serif] text-[13px] font-semibold" fill="#fff" stroke="#77777f" stroke-width=".6" text-anchor="middle"><text x="48" y="21">N</text><text x="48" y="91">S</text><text x="13" y="56">W</text><text x="83" y="56">O</text></g>
          <path d="M44 27l4 4 4-4M44 75l4-4 4 4M24 47l4 4-4 4M72 47l-4 4 4 4" fill="none" stroke="#777"/>
          <path d="M32.500 35.500h31v31h-31z" fill="#e7e7ea" stroke="#6e6e74"/>
          <path d="M38 41h20v20H38z" fill="#c3c8d4"/>
          <text x="48" y="54" class="font-[Roboto,sans-serif] text-[8px] font-semibold" fill="#555d6c" text-anchor="middle">OBEN</text>
        </svg>
        <button class="absolute top-[121px] right-[38px] flex items-center justify-center gap-[3px] w-[28px] h-[10px] rounded-xs bg-[#dcdbe9] text-gray-700">WKS <svg class="w-[6px] h-[5px]" viewBox="0 0 6 5"><path d="M.5.5h5L3 4z" fill="#fff" stroke="#999" stroke-width=".7"/></svg></button>
        <!-- UCS icon -->
        <svg class="absolute bottom-[7px] left-[9px] w-[50px] h-[50px]" viewBox="0 0 50 50" fill="none" stroke="#222"><path d="M3.500 43V13M4 43.500h31M.5 40.500h6v6h-6zM5 2l3.500 4L12 2M8.500 6v5M38 35l8 8M46 35l-8 8" /></svg>
      </div>
      <div class="flex h-[22px] shrink-0 border-t border-black bg-[#c9c7cc]">
        <div class="flex flex-col items-center w-[15px] bg-[#30343f] pt-[3px] gap-[3px]">
          <svg class="w-[11px] h-[4px]" viewBox="0 0 11 4"><path d="M0 .5h11M0 2.500h11" stroke="#ddd" stroke-dasharray="1 1"/></svg>
          <button aria-label="Befehlszeile schließen"><svg class="block w-[6px] h-[6px]" viewBox="0 0 6 6"><path d="M.5.500l5 5M5.500.5l-5 5" stroke="#fff" stroke-width="1.300"/></svg></button>
        </div>
        <pre class="flex-1 overflow-hidden pl-[1px] pt-[4px] font-['DejaVu_Sans_Mono',monospace] text-[7px] leading-[10px]">Befehl: l3dKomponenten
Befehl: RevitModelImport</pre>
      </div>
    </div>

    <!-- Planning palette -->
    <aside class="flex flex-col w-[150px] shrink-0 bg-[#4c5069] overflow-hidden whitespace-nowrap">
      <h2 class="flex items-center gap-[3px] h-[20px] shrink-0 pl-[7px] bg-[#222a33] font-semibold"><svg class="w-[8px] h-[9px]" viewBox="0 0 8 9" fill="none" stroke="#e4e6ea"><path d="M3 1 1 3v5M3 1v4M5 1h2v6l-2 1"/></svg>Flächentemper., 3D - Modellplanung</h2>
      <div class="grid grid-cols-5 h-[21px] shrink-0 bg-[#222a33]">
        <button aria-label="Menü" class="flex items-center justify-center"><svg class="w-[14px] h-[14px]" viewBox="0 0 14 14"><path d="M0 2.500h14M0 7.500h14M0 12.500h14" stroke="#fff" stroke-width="1.700"/></svg></button>
        <button aria-label="Zeichnen" class="flex items-center justify-center bg-[#4c5069] border-t border-[#d83a6c]"><svg class="w-[16px] h-[16px]" viewBox="0 0 16 16" fill="none" stroke="#f1f2f5"><path d="M10 1.500H1.500v13h13V7" stroke-width="1.200"/><path d="M5 11l1-3.500L13 .5 15.500 3l-7 7z" fill="#4c5069" stroke-width="1.200"/></svg></button>
        <button aria-label="Berechnen" class="flex items-center justify-center"><svg class="w-[13px] h-[16px]" viewBox="0 0 13 16"><path d="M1 1h11v14H1zM3.500 3.500h6v2h-6z" fill="none" stroke="#fff"/><path d="M3 8.500h7M3 10.500h7M3 12.500h7" stroke="#fff" stroke-dasharray="1.500 1"/></svg></button>
        <button aria-label="Dokument" class="flex items-center justify-center"><svg class="w-[13px] h-[16px]" viewBox="0 0 13 16"><path d="M1 1h7l4 4v10H1zM8 1v4h4" fill="none" stroke="#fff"/></svg></button>
        <button aria-label="Mehr" class="flex items-center justify-center"><svg class="w-[16px] h-[16px]" viewBox="0 0 16 16" fill="none" stroke="#fff" stroke-width="1.200"><path d="M1 5V1h4M11 1h4v4M15 11v4h-4M5 15H1v-4"/><path d="M4 8h2M7 8h2M10 8h2" stroke-width="1.700"/></svg></button>
      </div>
      <h3 class="h-[16px] shrink-0 pl-[8px] pt-[3px] font-semibold">Zeichnen</h3>
      <div class="flex h-[16px] shrink-0 pl-[7px]">
        <button aria-label="Räume" class="flex items-center justify-center w-[19px]"><svg class="w-[12px] h-[12px]" viewBox="0 0 12 12"><path d="M1 1h10v10H1z" fill="#eef0f3"/><path d="M1 1h5v10H1z" fill="#8fd2f5"/><path d="M6 6h5" stroke="#555" stroke-dasharray="2 1"/></svg></button>
        <button aria-label="Verlegung" class="flex items-center justify-center w-[19px] bg-[#353c48] border-t border-[#d83a6c]"><svg class="w-[12px] h-[12px]" viewBox="0 0 12 12"><use href="#spiral"/><path d="M9 6v6M6 9h6" stroke="#f8dc8e" stroke-width="2"/></svg></button>
        <button aria-label="Bearbeiten" class="flex items-center justify-center w-[19px]"><svg class="w-[12px] h-[12px]" viewBox="0 0 12 12"><use href="#spiral"/><path d="M6 11l5-7" stroke="#4c5069" stroke-width="3"/><path d="M7 10l4-6" stroke="#f5c9a0" stroke-width="1.800"/></svg></button>
      </div>
      <div class="flex flex-1 min-h-0 pl-[7px] pr-[2px] pb-[3px] gap-[2px]">
        <div class="relative flex flex-col flex-1 min-w-0 overflow-hidden bg-[#353c48] pl-[5px] pr-[4px] pt-[1px] font-[Roboto,sans-serif]">
          <label for="hoehe" class="h-[12px] shrink-0">Konstruktionshöhe</label>
          <div class="flex items-center gap-[4px] h-[15px] shrink-0">
            <svg class="w-[10px] h-[11px]" viewBox="0 0 10 11" fill="none" stroke="#e9eaee"><path d="M0 .5h5M2.500.5v10M0 10.500h5"/><path d="M5 8l4-6" stroke-width="2"/></svg>
            <div class="flex items-center flex-1 min-w-0 h-[13px] bg-[#4c5069] pl-[1px] pr-[3px]"><select id="hoehe" class="appearance-none flex-1 min-w-0"><option>Erdgeschoss</option></select><svg class="w-[5px] h-[3px]"><use href="#dn"/></svg></div>
          </div>
          <div class="flex items-center h-[18px] shrink-0 gap-[3px]">
            <button aria-label="Oben" class="flex items-center justify-center w-[15px] h-[14px] border border-[#4a93bd] bg-[#2c4c63]"><svg class="w-[11px] h-[11px]" viewBox="0 0 11 11"><path d="M0 1h11" stroke="#fff" stroke-width="2"/><path d="M0 4h11v7H0z" fill="#264a70"/><path d="M0 7l3-3M0 10.500 6.500 4M3 11l7-7M6.500 11 11 6.500" stroke="#9ad0f8"/></svg></button>
            <button aria-label="Oben inaktiv" class="flex items-center justify-center w-[15px] h-[14px]"><svg class="w-[11px] h-[11px]" viewBox="0 0 11 11"><path d="M0 1h11" stroke="#777c88" stroke-width="2"/><path d="M0 4h11v7H0z" fill="#4a505c"/><path d="M0 7l3-3M0 10.500 6.500 4M3 11l7-7M6.500 11 11 6.500" stroke="#7b818d"/></svg></button>
            <button aria-label="Unten" class="flex items-center justify-center w-[15px] h-[14px]"><svg class="w-[11px] h-[11px]" viewBox="0 0 11 11"><path d="M0 0h11v6H0z" fill="#e9eaee"/><path d="M0 5l5-5M3 6l6-6M6.500 6 11 1.500" stroke="#333"/><path d="M0 8h11" stroke="#fff"/><path d="M0 10h11" stroke="#8fc3ee" stroke-width="2"/></svg></button>
            <button aria-label="Dämmung" class="flex items-center justify-center w-[15px] h-[14px]"><svg class="w-[11px] h-[11px]" viewBox="0 0 11 11"><path d="M0 0h11v7H0z" fill="#2b659c"/><path d="M0 5l5-5M2.500 7l7-7M6.500 7 11 2" stroke="#9ad0f8"/><path d="M0 10h11" stroke="#fff" stroke-width="2"/></svg></button>
            <input aria-label="Höhe" class="w-[25px] h-[12px] ml-auto bg-[#4c5069]">
          </div>
          <h4 class="h-[12px] shrink-0 pt-[1px]">Zeichnen</h4>

          <div class="grid auto-rows-[15px] shrink-0">
            <button class="flex items-center gap-[2px]"><svg class="w-[11px] h-[11px]" viewBox="0 0 11 11"><path d="M.5.5h10v10H.5z" fill="#7cc8f2" stroke="#e9eaee"/><path d="M1 1h4v4H1z" fill="#23567f"/></svg>Fläche &lt;</button>
            <button class="flex items-center gap-[2px]"><svg class="w-[11px] h-[11px]" viewBox="0 0 11 11" fill="none" stroke="#e9eaee"><path d="M1 .5h1.500v10H1M5.500 0v11M10 .5H8.500v10H10"/><path d="M4 1v9M7 1v9" stroke="#7d8592"/></svg>Trennfuge &lt;</button>
            <button class="flex items-center gap-[2px]"><svg class="w-[11px] h-[11px]" viewBox="0 0 11 11"><path d="M.5.5h10v10H.5z" fill="none" stroke="#e9eaee"/><path d="M2.500 2.500h6v6h-6z" fill="#a5dcf6"/></svg>Platten &lt;</button>
            <button class="flex items-center gap-[2px]"><svg class="w-[11px] h-[11px]" viewBox="0 0 12 12"><use href="#spiral"/><path d="M9 6v6M6 9h6" stroke="#f8dc8e" stroke-width="2"/></svg>Rohrverlegung &lt;</button>
            <div class="flex items-center">
              <button class="flex items-center gap-[2px]"><svg class="w-[11px] h-[11px]" viewBox="0 0 11 11"><path d="M0 1.500h11M0 4h11" stroke="#fff" stroke-width="1.500"/><path d="M1.500 5v6M4.500 5v6M7 5v6M9.500 5v6" stroke="#e9eaee"/></svg>Verteiler &lt;</button>
              <label for="anschl" class="ml-auto">Anschlüsse:</label>
              <input id="anschl" value="6" class="w-[18px] h-[12px] ml-[5px] mr-[4px] pr-[4px] bg-[#4c5069] text-right">
            </div>
            <button class="flex items-center gap-[2px]"><svg class="w-[11px] h-[11px]" viewBox="0 0 11 11"><path d="M0 1.500h11M0 4h11" stroke="#fff" stroke-width="1.500"/><path d="M1.500 5v4M4.500 5v6" stroke="#e9eaee"/><path d="M6.500 5v6M9.500 5v4M3 8.500h8" stroke="#6db1e8"/></svg>Zuleitung &lt;</button>
            <button class="flex items-center gap-[2px]"><svg class="w-[11px] h-[11px]" viewBox="0 0 11 11"><path d="M2 .5H.5v10H2M9 .5h1.500v10H9" fill="none" stroke="#e9eaee"/><path d="M2.500 2.500h6v6h-6z" fill="#787f8b" stroke="#c3c7ce"/></svg>Gruppen &lt;</button>
            <button class="flex items-center gap-[2px] justify-self-start pr-[4px] bg-[#2c323d]"><svg class="w-[11px] h-[11px]" viewBox="0 0 12 12"><use href="#spiral"/><path d="M6 6.500h5v2H6z" fill="#e0705c"/><path d="M6 9h5v2H6z" fill="#7cc8f2"/></svg>Färben &lt;</button>
          </div>
          <hr class="mt-[4px] border-gray-400 shrink-0">
          <div class="flex items-center gap-[4px] h-[20px] shrink-0">
            <button aria-label="Boden" class="flex items-center justify-center w-[15px] h-[14px] border border-[#4a93bd] bg-[#2c4c63]"><svg class="w-[9px] h-[9px]" viewBox="0 0 9 9"><path d="M.5 2.500h6v6h-6zM2 .5h6.500v6L6.500 8.500" fill="#fff" stroke="#ddd"/><path d="M6.500 2.500v6M1 2.500h5.500l2-2" fill="none" stroke="#8a8f99" stroke-width=".7"/><path d="M1 6.500h5v2H1z" fill="#d9535b"/></svg></button>
            <button aria-label="Decke" class="flex items-center justify-center w-[15px] h-[14px]"><svg class="w-[9px] h-[9px]" viewBox="0 0 9 9"><path d="M.5 2.500h6v6h-6zM2 .5h6.500v6L6.500 8.500" fill="#fff" stroke="#ddd"/></svg></button>
            <button aria-label="Wand" class="flex items-center justify-center w-[15px] h-[14px]"><svg class="w-[9px] h-[9px]" viewBox="0 0 9 9"><path d="M.5 2.500h6v6h-6zM2 .5h6.500v6L6.500 8.500" fill="#fff" stroke="#ddd"/><path d="M6.500 2.500v6M1 2.500h5.500l2-2" fill="none" stroke="#8a8f99" stroke-width=".7"/><path d="M0 2h2v6H0z" fill="#d9535b"/></svg></button>
          </div>

          <div class="flex flex-col gap-[2px] mt-[1px] shrink-0">
            <div class="flex items-center h-[13px] bg-[#4c5069] pl-[2px] pr-[3px]"><select aria-label="Hersteller" class="appearance-none flex-1 min-w-0"><option>aquatherm 07/2018</option></select><svg class="w-[5px] h-[3px]"><use href="#dn"/></svg></div>
            <div class="flex items-center h-[13px] bg-[#4c5069] pl-[2px] pr-[3px]"><select aria-label="System" class="appearance-none flex-1 min-w-0"><option>Black System Bodenregister Calciumsulfat</option></select><svg class="w-[5px] h-[3px] ml-[3px]"><use href="#dn"/></svg></div>
            <div class="flex items-center h-[13px] bg-[#4c5069] pl-[2px] pr-[3px]"><select aria-label="Anschluss" class="appearance-none flex-1 min-w-0"><option>Heizen Anschluss 64</option></select><svg class="w-[5px] h-[3px]"><use href="#dn"/></svg></div>
            <div class="flex items-center h-[13px] bg-[#4c5069] pl-[2px] pr-[3px]"><select aria-label="Estrich" class="appearance-none flex-1 min-w-0"><option>Black System Estrich</option></select><svg class="w-[5px] h-[3px]"><use href="#dn"/></svg></div>
            <div class="flex items-center h-[13px] bg-[#4c5069] pl-[2px] pr-[3px]"><select aria-label="Nutzung" class="appearance-none flex-1 min-w-0"><option>gleichartige Nutzung d=3.5cm R=1.1</option></select><svg class="w-[5px] h-[3px] ml-[3px]"><use href="#dn"/></svg></div>
          </div>
          <div class="flex items-center h-[15px] mt-[3px] shrink-0">
            <label for="t1" class="flex-1">T-Angrenz.:</label>
            <input id="t1" value="20" class="w-[17px] h-[12px] pr-[4px] bg-[#4c5069] text-right"><span class="w-[7px] text-center">/</span><input aria-label="T-Angrenz. 2" value="24" class="w-[17px] h-[12px] pr-[4px] bg-[#4c5069] text-right"><span class="w-[15px] pl-[4px]">°C</span>
          </div>
          <label for="belag" class="h-[10px] shrink-0">Oberbelag</label>
          <div class="flex items-center h-[13px] bg-[#4c5069] pl-[2px] pr-[3px] shrink-0"><select id="belag" class="appearance-none h-[10px] bg-[#0a7ad8] pl-[1px] pr-[1px]"><option>Standard= 0.10</option></select><svg class="w-[5px] h-[3px] ml-auto"><use href="#dn"/></svg></div>
          <label for="muster" class="h-[13px] pt-[3px] shrink-0">Verlegemuster/Raster</label>
          <div class="grid grid-cols-2 gap-[6px] shrink-0">
            <div class="flex items-center h-[13px] bg-[#4c5069] pl-[2px] pr-[3px]"><select id="muster" class="appearance-none flex-1 min-w-0"><option>Mäander</option></select><svg class="w-[5px] h-[3px]"><use href="#dn"/></svg></div>
            <div class="flex items-center h-[13px] bg-[#4c5069] pl-[2px] pr-[3px]"><select aria-label="Raster" class="appearance-none flex-1 min-w-0"><option>40 mm</option></select><svg class="w-[5px] h-[3px]"><use href="#dn"/></svg></div>
          </div>
          <label for="laenge" class="h-[14px] pt-[4px] shrink-0">Platten- Länge/Breite</label>
          <div class="grid grid-cols-2 gap-[6px] shrink-0">
            <div class="flex items-center h-[13px] bg-[#4c5069] pl-[2px] pr-[3px]"><select id="laenge" class="appearance-none flex-1 min-w-0"><option>*</option></select><svg class="w-[5px] h-[3px]"><use href="#dn"/></svg></div>
            <div class="flex items-center h-[13px] bg-[#4c5069] pl-[2px] pr-[3px]"><select aria-label="Breite" class="appearance-none flex-1 min-w-0"><option>*</option></select><svg class="w-[5px] h-[3px]"><use href="#dn"/></svg></div>
          </div>
          <div class="flex items-center h-[13px] mt-[4px] bg-[#4c5069] pl-[2px] pr-[3px] shrink-0"><select aria-label="Typ" class="appearance-none flex-1 min-w-0"><option>Typ 64 Estrich Bodenmontage&nbsp; 40 x</option></select><svg class="w-[5px] h-[3px] ml-[3px]"><use href="#dn"/></svg></div>
          <hr class="mt-[4px] mb-[5px] border-gray-400 shrink-0">
          <label class="flex items-center gap-[2px] h-[12px] shrink-0"><input type="radio" name="modus" checked class="appearance-none w-[9px] h-[9px] rounded-full border border-white checked:bg-white checked:shadow-[inset_0_0_0_1px_#353c48]">Heizen</label>
          <label class="flex items-center gap-[2px] h-[12px] shrink-0"><input type="radio" name="modus" class="appearance-none w-[9px] h-[9px] rounded-full border border-white checked:bg-white">Kühlen</label>
          <div class="flex items-center h-[13px] mt-[8px] shrink-0"><label for="traum" class="flex-1">T-Raum:</label><input id="traum" value="20" class="w-[20px] h-[12px] pr-[4px] bg-[#4c5069] text-right"><span class="w-[21px] pl-[3px]">°C</span></div>
          <div class="flex items-center h-[13px] mt-[1px] shrink-0"><label for="tvor" class="flex-1">T-Vorlauf:</label><input id="tvor" value="40" class="w-[20px] h-[12px] pr-[4px] bg-[#4c5069] text-right"><span class="w-[21px] pl-[3px]">°C</span></div>

          <!-- Mouse pointer -->
          <svg class="absolute left-[29px] top-[170px] w-[17px] h-[26px]" viewBox="0 0 17 26"><path d="M1 1v19l4.500-4 3.500 8 3.500-1.500L9 15h6.500z" fill="#fff" stroke="#222"/></svg>
        </div>
        <div class="w-[4px] bg-[#3f4558]"><div class="h-[84%] bg-[#5a6082]"></div></div>
      </div>
    </aside>
  </main>

  <!-- Video player controls -->
  <footer class="flex items-center h-[35px] shrink-0 pl-[3px] pr-[9px] bg-white text-[#1c2b33]">
    <button aria-label="Wiedergabe"><svg class="w-[29px] h-[29px]" viewBox="0 0 29 29"><circle cx="14.500" cy="14.500" r="14.500" fill="#17404b"/><path d="M10 7l13 7.500L10 22z" fill="#fff"/></svg></button>
    <span class="w-[52px] ml-[12px] font-['DejaVu_Sans',sans-serif] text-[6px] whitespace-nowrap">04:07 / 04:40</span>
    <input type="range" aria-label="Position" min="0" max="1000" value="887" class="flex-1 min-w-0 h-[2px] appearance-none bg-[linear-gradient(to_right,#12262f_88%,#cfd2d4_88%)] [&::-webkit-slider-thumb]:appearance-none [&::-webkit-slider-thumb]:w-[8px] [&::-webkit-slider-thumb]:h-[8px] [&::-webkit-slider-thumb]:rounded-full [&::-webkit-slider-thumb]:bg-[#0d1c24]">
    <div class="flex items-center gap-[14px] ml-[68px]">
      <button aria-label="Einstellungen"><svg class="w-[15px] h-[15px]" viewBox="0 0 15 15" fill="none" stroke="#1d1d1d"><circle cx="7.500" cy="7.500" r="2.500"/><path d="M6.500 1h2l.4 1.700 1.300.6 1.500-1 1.400 1.400-1 1.500.6 1.300 1.700.4v2l-1.700.4-.6 1.300 1 1.500-1.400 1.400-1.500-1-1.300.6-.4 1.700h-2l-.4-1.700-1.300-.6-1.500 1-1.400-1.400 1-1.500-.6-1.300L.6 8.500v-2l1.700-.4.6-1.300-1-1.500 1.400-1.400 1.500 1 1.300-.6z"/></svg></button>
      <button aria-label="Geschwindigkeit"><svg class="w-[19px] h-[15px]" viewBox="0 0 19 15" fill="none" stroke="#1d1d1d"><path d="M10.500 3l7.500 4.500-7.500 4.500z"/><path d="M8.500 5.500 5.500 3.500v8l3-2M3.500 5.500l-3-2v8l3-2" stroke-width=".9"/></svg></button>
      <button aria-label="Lautstärke"><svg class="w-[17px] h-[15px]" viewBox="0 0 17 15" fill="none" stroke="#1d1d1d" stroke-width="1.100"><path d="M1 5.500h3.500l6-4v12l-6-4H1zM12.500 5c1 1.500 1 3.500 0 5M14.500 3c2 2.500 2 6.500 0 9"/></svg></button>
      <button aria-label="Vollbild beenden"><svg class="w-[14px] h-[15px]" viewBox="0 0 14 15" fill="none" stroke="#1d1d1d" stroke-width="1.200"><path d="M13.500 1.500l-5 5M8.500 2v4.500H13M.5 13.500l5-5M1 8.500h4.500V13"/></svg></button>
    </div>
  </footer>
</body>
</html>
